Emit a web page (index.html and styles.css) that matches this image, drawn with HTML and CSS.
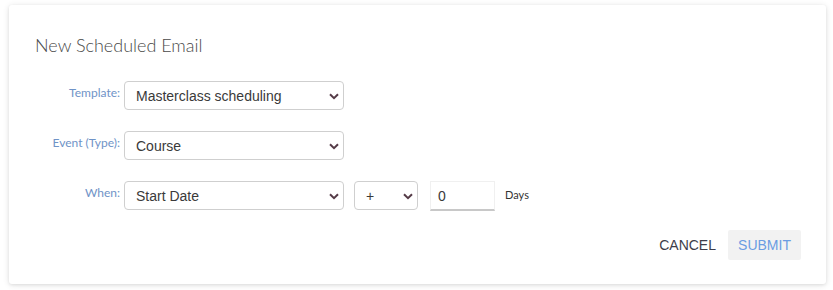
FILE: index.html
```html
<!DOCTYPE html>
<html>
<head>
<meta charset="utf-8">
<link rel="stylesheet" href="styles.css">
</head>
<body>
<div class="card">
  <h1 class="title">New Scheduled Email</h1>
  <div class="form">
    <div class="row">
      <label class="label">Template:</label>
      <div class="select wide"><span>Masterclass scheduling</span><svg class="chev" width="10" height="7" viewBox="0 0 10 7"><path d="M1 1.2 L5 5.2 L9 1.2" fill="none" stroke="#553b47" stroke-width="2"/></svg></div>
    </div>
    <div class="row">
      <label class="label">Event (Type):</label>
      <div class="select wide"><span>Course</span><svg class="chev" width="10" height="7" viewBox="0 0 10 7"><path d="M1 1.2 L5 5.2 L9 1.2" fill="none" stroke="#553b47" stroke-width="2"/></svg></div>
    </div>
    <div class="row">
      <label class="label">When:</label>
      <div class="when">
        <div class="select wide"><span>Start Date</span><svg class="chev" width="10" height="7" viewBox="0 0 10 7"><path d="M1 1.2 L5 5.2 L9 1.2" fill="none" stroke="#553b47" stroke-width="2"/></svg></div>
        <div class="select small"><span>+</span><svg class="chev" width="10" height="7" viewBox="0 0 10 7"><path d="M1 1.2 L5 5.2 L9 1.2" fill="none" stroke="#553b47" stroke-width="2"/></svg></div>
        <div class="num">0</div>
        <span class="days">Days</span>
      </div>
    </div>
  </div>
  <div class="actions">
    <button class="btn cancel">CANCEL</button>
    <button class="btn submit">SUBMIT</button>
  </div>
</div>
</body>
</html>
```
FILE: styles.css
```css
html, body { margin: 0; padding: 0; background: #fff; }
body { padding: 5px 7px 6px 9px; }
.card {
  width: 817px;
  height: 279px;
  box-sizing: border-box;
  background: #fff;
  border-radius: 3px;
  box-shadow: 0 1px 6px rgba(0,0,0,0.12), 0 1px 3px rgba(0,0,0,0.06);
  padding: 29px 25px 24px 26px;
  display: flex;
  flex-direction: column;
}
.title {
  margin: 0;
  font-family: Lato, sans-serif;
  font-weight: 300;
  font-size: 18px;
  line-height: 22px;
  color: #4a4a4a;
}
.form {
  margin-top: 25px;
  display: flex;
  flex-direction: column;
  gap: 21px;
}
.row {
  display: flex;
  align-items: center;
  gap: 4px;
  height: 29px;
}
.label {
  width: 85px;
  text-align: right;
  font-family: Lato, sans-serif;
  font-size: 12px;
  color: #6f93c7;
  margin-top: -6px;
}
.select {
  box-sizing: border-box;
  height: 29px;
  border: 1px solid #cfcfcf;
  border-radius: 4px;
  display: flex;
  align-items: center;
  justify-content: space-between;
  padding: 0 3px 0 11px;
  font-family: "Liberation Sans", Arial, sans-serif;
  font-size: 14px;
  color: #3a3a3a;
}
.select .chev { margin-top: 2px; margin-right: 1px; }
.wide { width: 220px; }
.small { width: 64px; margin-left: 10px; }
.when { display: flex; align-items: center; height: 29px; }
.num {
  box-sizing: border-box;
  margin-left: 12px;
  width: 65px;
  height: 30px;
  border: 1px solid #f0f0f0;
  border-bottom: 2px solid #c8c8c8;
  padding: 3px 0 0 7px;
  font-family: "Liberation Sans", Arial, sans-serif;
  font-size: 14px;
  color: #3a3a3a;
  line-height: 22px;
}
.days {
  margin-left: 10px;
  font-family: Lato, sans-serif;
  font-size: 11px;
  color: #333;
  margin-top: -2px;
}
.actions {
  margin-top: auto;
  display: flex;
  justify-content: flex-end;
  align-items: center;
  gap: 4px;
}
.btn {
  border: none;
  background: transparent;
  height: 30px;
  font-family: "Liberation Sans", Arial, sans-serif;
  font-size: 14px;
  padding: 0 8px;
  border-radius: 2px;
  cursor: pointer;
}
.cancel { color: #3d3d4a; }
.submit { background: #f2f2f2; color: #6b9de2; width: 73px; }
```
